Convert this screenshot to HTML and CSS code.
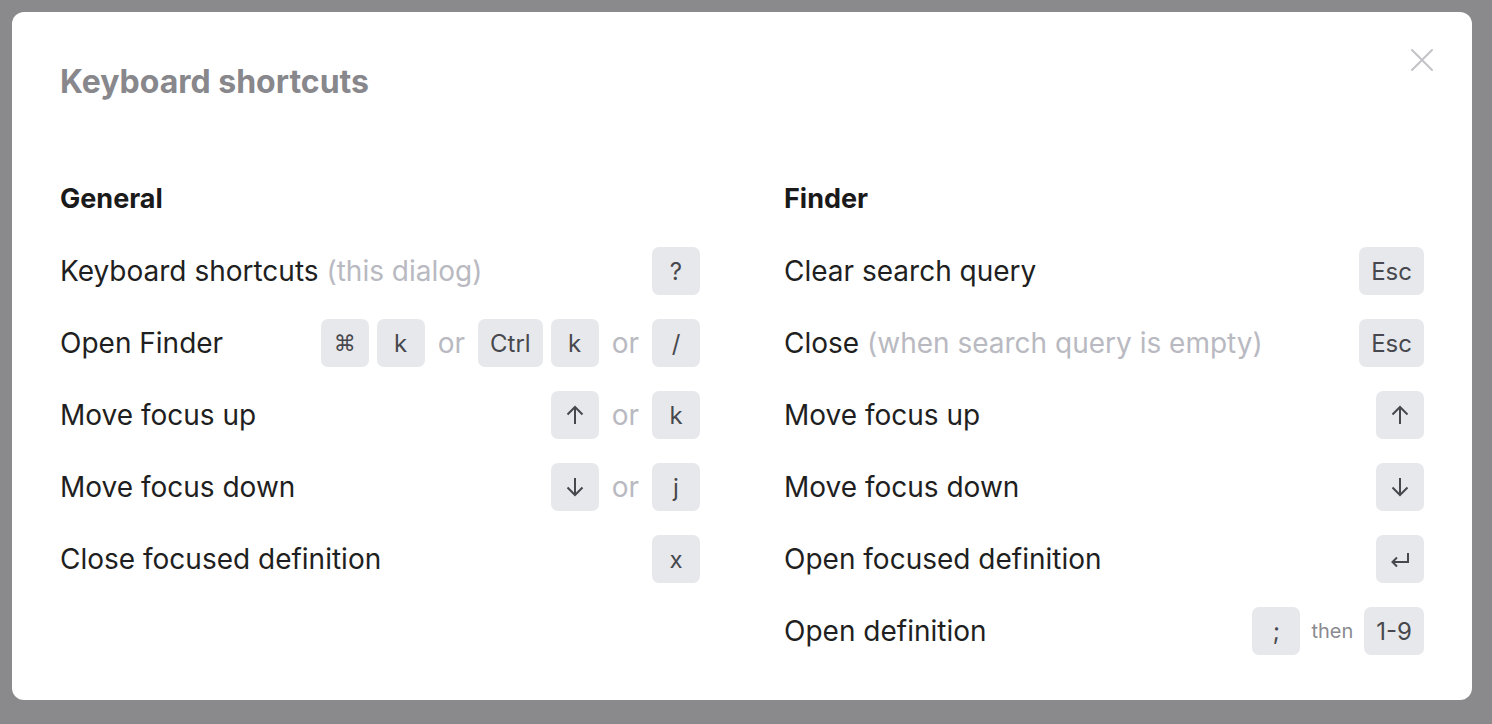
FILE: index.html
```html
<!DOCTYPE html>
<html lang="en">
<head>
    <meta charset="UTF-8">
    <meta name="viewport" content="width=device-width, initial-scale=1.0">
    <title>Keyboard shortcuts</title>
    <link rel="stylesheet" href="styles.css">
</head>
<body>

    <div class="dialog">
        <div class="dialog-header">
            <h1>Keyboard shortcuts</h1>
            <button class="close" aria-label="Close">
                <svg width="24" height="24" viewBox="0 0 24 24"><path d="M2 2 L22 22 M22 2 L2 22" stroke="currentColor" stroke-width="2" stroke-linecap="round"/></svg>
            </button>
        </div>

        <div class="columns">
            <!-- General -->
            <section class="group">
                <h2>General</h2>
                <div class="row">
                    <span class="label">Keyboard shortcuts <span class="muted">(this dialog)</span></span>
                    <span class="keys"><kbd>?</kbd></span>
                </div>
                <div class="row">
                    <span class="label">Open Finder</span>
                    <span class="keys"><kbd class="sym">⌘</kbd><kbd>k</kbd><span class="or">or</span><kbd class="wide">Ctrl</kbd><kbd>k</kbd><span class="or">or</span><kbd>/</kbd></span>
                </div>
                <div class="row">
                    <span class="label">Move focus up</span>
                    <span class="keys">
                        <kbd><svg width="20" height="20" viewBox="0 0 20 20"><path d="M10 19 V2 M2.5 9.5 L10 2 L17.5 9.5" fill="none" stroke="currentColor" stroke-width="2"/></svg></kbd><span class="or">or</span><kbd>k</kbd>
                    </span>
                </div>
                <div class="row">
                    <span class="label">Move focus down</span>
                    <span class="keys">
                        <kbd><svg width="20" height="20" viewBox="0 0 20 20"><path d="M10 1 V18 M2.5 10.5 L10 18 L17.5 10.5" fill="none" stroke="currentColor" stroke-width="2"/></svg></kbd><span class="or">or</span><kbd>j</kbd>
                    </span>
                </div>
                <div class="row">
                    <span class="label">Close focused definition</span>
                    <span class="keys"><kbd>x</kbd></span>
                </div>
            </section>

            <!-- Finder -->
            <section class="group">
                <h2>Finder</h2>
                <div class="row">
                    <span class="label">Clear search query</span>
                    <span class="keys"><kbd class="wide">Esc</kbd></span>
                </div>
                <div class="row">
                    <span class="label">Close <span class="muted">(when search query is empty)</span></span>
                    <span class="keys"><kbd class="wide">Esc</kbd></span>
                </div>
                <div class="row">
                    <span class="label">Move focus up</span>
                    <span class="keys"><kbd><svg width="20" height="20" viewBox="0 0 20 20"><path d="M10 19 V2 M2.5 9.5 L10 2 L17.5 9.5" fill="none" stroke="currentColor" stroke-width="2"/></svg></kbd></span>
                </div>
                <div class="row">
                    <span class="label">Move focus down</span>
                    <span class="keys"><kbd><svg width="20" height="20" viewBox="0 0 20 20"><path d="M10 1 V18 M2.5 10.5 L10 18 L17.5 10.5" fill="none" stroke="currentColor" stroke-width="2"/></svg></kbd></span>
                </div>
                <div class="row">
                    <span class="label">Open focused definition</span>
                    <span class="keys"><kbd><svg width="20" height="20" viewBox="0 0 20 20"><path d="M18 4 V13 H2.5 M7 8.5 L2.5 13 L7 17.5" fill="none" stroke="currentColor" stroke-width="2"/></svg></kbd></span>
                </div>
                <div class="row">
                    <span class="label">Open definition</span>
                    <span class="keys"><kbd>;</kbd><span class="then">then</span><kbd class="wide">1-9</kbd></span>
                </div>
            </section>
        </div>
    </div>

</body>
</html>
```

FILE: styles.css
```css
body {
    margin: 0;
    padding: 12px 20px 24px 12px;
    background-color: #8a8a8c;
    font-family: Inter, "Noto Sans", sans-serif;
}
.dialog {
    height: 688px;
    box-sizing: border-box;
    background: #fff;
    border-radius: 12px;
    padding: 48px 48px 0 48px;
}
.dialog-header {
    display: flex;
    justify-content: space-between;
    align-items: flex-start;
}
h1 {
    margin: 0;
    font-size: 32px;
    line-height: 44px;
    font-weight: 700;
    color: #87878c;
}
.close {
    margin: -12px -10px 0 0;
    padding: 0;
    border: none;
    background: none;
    color: #c2c2c7;
    cursor: pointer;
}
.columns {
    display: grid;
    grid-template-columns: 1fr 1fr;
    column-gap: 84px;
    margin-top: 71px;
}
h2 {
    margin: 0 0 24px;
    font-size: 27px;
    line-height: 48px;
    font-weight: 700;
    color: #1a1a1a;
}
.row {
    display: flex;
    justify-content: space-between;
    align-items: center;
    height: 48px;
    margin-bottom: 24px;
    font-size: 28px;
    color: #1f1f22;
}
.muted {
    color: #b9b9c1;
}
.keys {
    display: flex;
    align-items: center;
    gap: 8px;
}
kbd {
    display: flex;
    align-items: center;
    justify-content: center;
    min-width: 48px;
    height: 48px;
    box-sizing: border-box;
    padding: 0 11px;
    border-radius: 7px;
    background-color: #e7e8ec;
    color: #47484d;
    font-family: Inter, "Noto Sans", sans-serif;
    font-size: 24px;
}
kbd.wide {
    padding: 0 12px;
}
kbd.sym {
    font-family: "DejaVu Sans", sans-serif;
    font-size: 22px;
}
.or {
    margin: 0 5px;
    font-size: 28px;
    color: #b9b9c1;
}
.then {
    margin: 0 3px;
    font-size: 20px;
    color: #8a8a90;
}
```
